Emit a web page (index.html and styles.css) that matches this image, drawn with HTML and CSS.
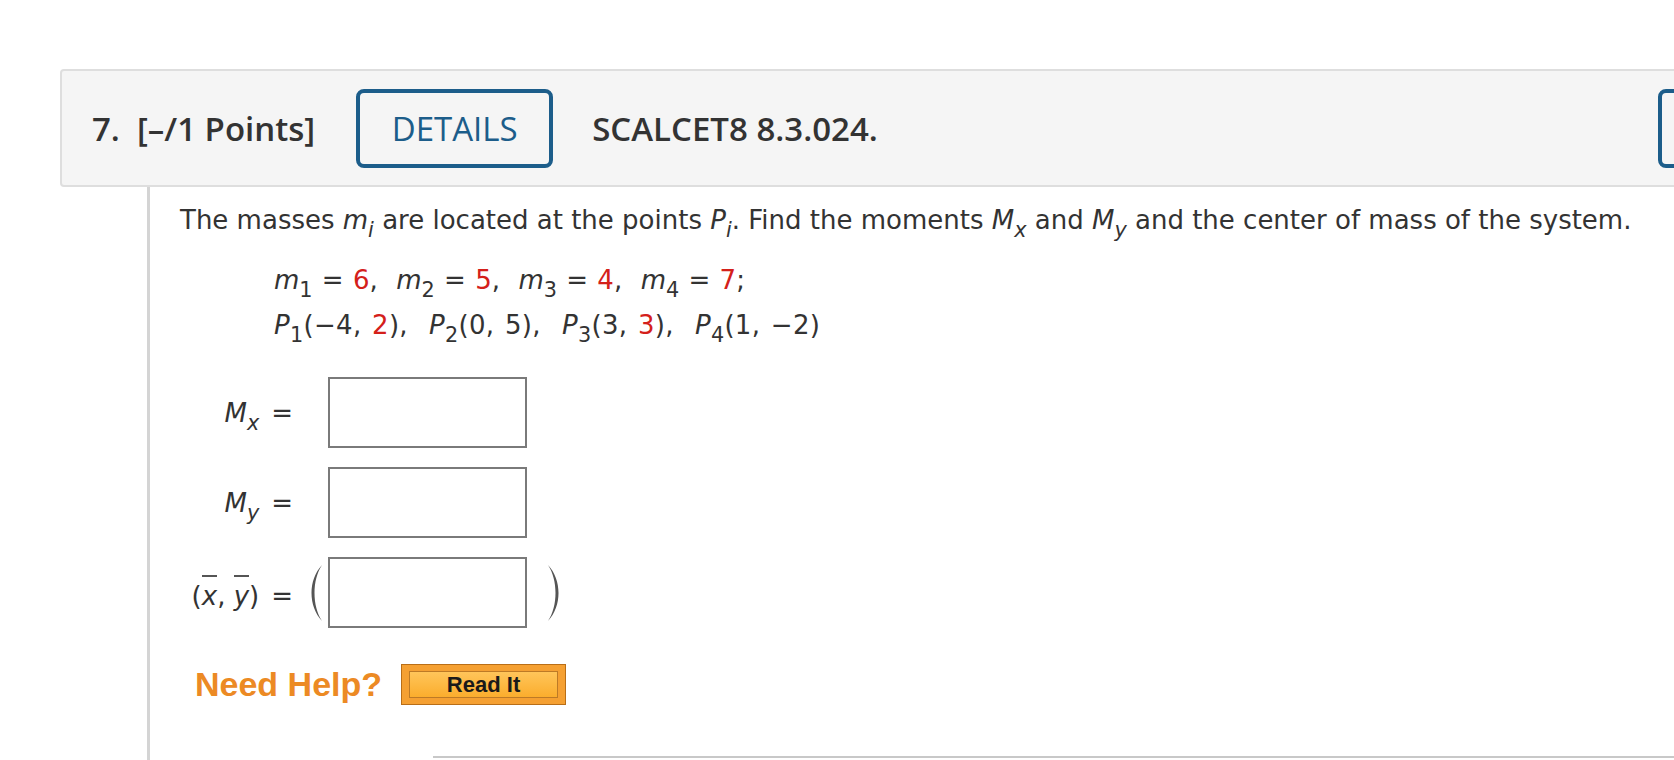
FILE: index.html
```html
<!DOCTYPE html>
<html>
<head>
<meta charset="utf-8">
<link rel="stylesheet" href="styles.css">
</head>
<body>
<div class="question">
  <div class="qhead">
    <span class="qnum">7.</span>
    <span class="qpts">[–/1 Points]</span>
    <button class="hbtn">DETAILS</button>
    <span class="qref">SCALCET8 8.3.024.</span>
    <button class="hbtn notes" aria-label="My Notes"></button>
  </div>
  <div class="qbody">
    <p class="prompt">The masses <i>m<sub>i</sub></i> are located at the points <i>P<sub>i</sub></i>. Find the moments <i>M<sub>x</sub></i> and <i>M<sub>y</sub></i> and the center of mass of the system.</p>
    <div class="given">
      <div class="eq"><i>m</i><sub>1</sub> = <span class="r">6</span>,&nbsp; <i>m</i><sub>2</sub> = <span class="r">5</span>,&nbsp; <i>m</i><sub>3</sub> = <span class="r">4</span>,&nbsp; <i>m</i><sub>4</sub> = <span class="r">7</span>;</div>
      <div class="eq pts"><i>P</i><sub>1</sub>(−4, <span class="r">2</span>),&nbsp; <i>P</i><sub>2</sub>(0, 5),&nbsp; <i>P</i><sub>3</sub>(3, <span class="r">3</span>),&nbsp; <i>P</i><sub>4</sub>(1, −2)</div>
    </div>
    <div class="answers">
      <div class="lbl"><i>M<sub>x</sub></i><span class="eqs">=</span></div>
      <div class="field"></div>

      <div class="lbl"><i>M<sub>y</sub></i><span class="eqs">=</span></div>
      <div class="field"></div>

      <div class="lbl">(<i class="bar">x</i>, <i class="bar">y</i>)<span class="eqs">=</span></div>
      <svg class="lp" width="14" height="58" viewBox="0 0 14 58"><path d="M13 1 C-1 16 -1 42 13 57 C3 42 3 16 13 1 Z" fill="#555"/></svg>
      <div class="field"></div>
      <svg class="rp" width="14" height="58" viewBox="0 0 14 58"><path d="M1 1 C15 16 15 42 1 57 C11 42 11 16 1 1 Z" fill="#555"/></svg>
    </div>
    <div class="help">
      <span class="needhelp">Need Help?</span>
      <button class="readit"><span class="readit-in">Read It</span></button>
    </div>
    <div class="nextbox"></div>
  </div>
</div>
</body>
</html>
```
FILE: styles.css
```css
html, body {
  margin: 0;
  padding: 0;
  background: #fff;
  overflow: hidden;
}
body {
  width: 1674px;
  height: 760px;
}
.question {
  margin: 69px 0 0 60px;
  width: 1800px;
}
.qhead {
  box-sizing: border-box;
  height: 118px;
  display: flex;
  align-items: center;
  background: #f5f5f5;
  border: 2px solid #dedede;
  border-radius: 4px;
  padding: 0 3px 0 30px;
  font-family: "Open Sans", sans-serif;
  font-size: 33px;
  color: #333;
}
.qnum {
  font-weight: 600;
  margin-right: 17px;
}
.qpts {
  font-weight: 600;
  margin-right: 41px;
}
.hbtn {
  box-sizing: border-box;
  width: 197px;
  height: 79px;
  border: 4px solid #1c5d8a;
  border-radius: 8px;
  background: transparent;
  font: 400 33px "Open Sans", sans-serif;
  color: #1c5d8a;
  padding: 0;
  white-space: nowrap;
}
.qref {
  font-weight: 600;
  margin-left: 39px;
}
.notes {
  margin-left: auto;
}
.qbody {
  margin-left: 87px;
  border-left: 3px solid #d4d4d4;
  padding: 18px 0 0 30px;
  height: 700px;
  font-family: "DejaVu Sans", Verdana, sans-serif;
  font-size: 26px;
  color: #333;
}
.qbody sub {
  font-size: 0.8em;
  vertical-align: -8px;
  line-height: 0;
}
.prompt {
  margin: 0;
  line-height: 30px;
  white-space: nowrap;
}
.given {
  margin-top: 23px;
  padding-left: 94px;
}
.eq {
  line-height: 45px;
  white-space: nowrap;
  word-spacing: 1px;
}
.eq.pts {
  word-spacing: 2px;
  letter-spacing: 0.3px;
}
.r {
  color: #d4201a;
}
.answers {
  margin-top: 29px;
  display: grid;
  grid-template-columns: 113px 35px 199px auto;
  row-gap: 19px;
  align-items: center;
  justify-content: start;
}
.lbl {
  grid-column: 1;
  text-align: right;
  line-height: 30px;
  white-space: nowrap;
}
.eqs {
  margin-left: 12px;
}
.bar {
  display: inline-block;
  border-top: 2px solid #555;
  line-height: 26px;
  padding-top: 6px;
}
.field {
  grid-column: 3;
  box-sizing: border-box;
  height: 71px;
  border: 2px solid #7a7a7a;
  background: #fff;
}
.lp {
  grid-column: 2;
  justify-self: end;
  margin-right: 5px;
}
.rp {
  grid-column: 4;
  margin-left: 20px;
}
.help {
  margin-top: 36px;
  display: flex;
  align-items: center;
  padding-left: 15px;
}
.needhelp {
  font: 700 34px "Liberation Sans", Arial, sans-serif;
  color: #ec8a24;
  margin-right: 19px;
}
.readit {
  box-sizing: border-box;
  width: 165px;
  height: 41px;
  padding: 6px 7px;
  border: 1px solid #b96e17;
  background: #f5a032;
  display: flex;
}
.readit-in {
  flex: 1;
  display: flex;
  align-items: center;
  justify-content: center;
  border: 1px solid #bd7a26;
  background: linear-gradient(#ffc55a, #fbad2d);
  font: 700 22px "Liberation Sans", Arial, sans-serif;
  color: #1a1a1a;
}
.nextbox {
  margin-top: 51px;
  margin-left: 253px;
  border-top: 2px solid #c8c8c8;
  height: 40px;
}
```
